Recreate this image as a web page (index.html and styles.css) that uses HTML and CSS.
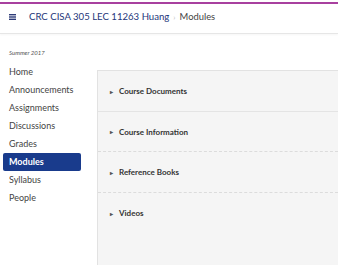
FILE: index.html
```html
<!DOCTYPE html>
<html>
<head>
<meta charset="utf-8">
<link rel="stylesheet" href="styles.css">
</head>
<body>
<div class="topline"></div>
<header class="header">
  <svg class="burger" width="7" height="6" viewBox="0 0 7 6"><rect x="0" y="0" width="7" height="1.4" fill="#2d3b78"/><rect x="0" y="2.3" width="7" height="1.4" fill="#2d3b78"/><rect x="0" y="4.6" width="7" height="1.4" fill="#2d3b78"/></svg>
  <span class="crumb">CRC CISA 305 LEC 11263 Huang</span>
  <span class="sep">›</span>
  <span class="current">Modules</span>
</header>
<div class="layout">
  <nav class="nav">
    <div class="term">Summer 2017</div>
    <a class="item">Home</a>
    <a class="item">Announcements</a>
    <a class="item">Assignments</a>
    <a class="item">Discussions</a>
    <a class="item">Grades</a>
    <a class="item active">Modules</a>
    <a class="item">Syllabus</a>
    <a class="item">People</a>
  </nav>
  <main class="main">
    <div class="modules">
      <div class="mod r1"><span class="tri">▸</span>Course Documents</div>
      <div class="mod r2"><span class="tri">▸</span>Course Information</div>
      <div class="mod r3"><span class="tri">▸</span>Reference Books</div>
      <div class="mod r4"><span class="tri">▸</span>Videos</div>
    </div>
  </main>
</div>
</body>
</html>
```
FILE: styles.css
```css
* { box-sizing: border-box; }
html, body { margin: 0; padding: 0; }
body {
  width: 338px;
  height: 265px;
  overflow: hidden;
  background: #fff;
  font-family: Lato, "Liberation Sans", sans-serif;
  color: #333;
}
.topline {
  margin-top: 2px;
  height: 2px;
  background: #a8409f;
}
.header {
  height: 30px;
  display: flex;
  align-items: center;
  padding-left: 9px;
  padding-bottom: 4px;
  border-bottom: 1px solid #e6e6e6;
  box-shadow: 0 1px 2px rgba(0,0,0,0.04);
}
.burger { margin-right: 13px; }
.crumb { font-size: 9.6px; color: #24367a; }
.sep { font-size: 8px; color: #c4c4c4; margin: 0 4px; }
.current { font-size: 9.4px; color: #444; }
.layout {
  display: flex;
}
.nav {
  width: 97px;
  flex: none;
  padding: 15px 3px 0 3px;
}
.term {
  font-size: 6px;
  font-style: italic;
  color: #555;
  padding-left: 6px;
  height: 14px;
}
.item {
  display: block;
  height: 18px;
  line-height: 18px;
  font-size: 9px;
  color: #444;
  padding-left: 6px;
  width: 78px;
  border-radius: 2px;
}
.item.active {
  background: #193b8c;
  color: #fff;
  font-weight: bold;
}
.main {
  flex: 1;
  padding-top: 36px;
}
.modules {
  background: #f5f5f5;
  border-top: 1px solid #e2e2e2;
  border-left: 1px solid #e2e2e2;
  height: 200px;
}
.mod {
  display: flex;
  align-items: center;
  padding-left: 12px;
  font-size: 8px;
  font-weight: bold;
  color: #333;
}
.r1 { height: 41px; border-bottom: 1px solid #e4e4e4; }
.r2 { height: 40px; border-bottom: 1px dashed #dcdcdc; }
.r3 { height: 41px; border-bottom: 1px dashed #dcdcdc; }
.r4 { height: 40px; }
.tri { font-size: 6px; margin-right: 6px; color: #555; }
```
